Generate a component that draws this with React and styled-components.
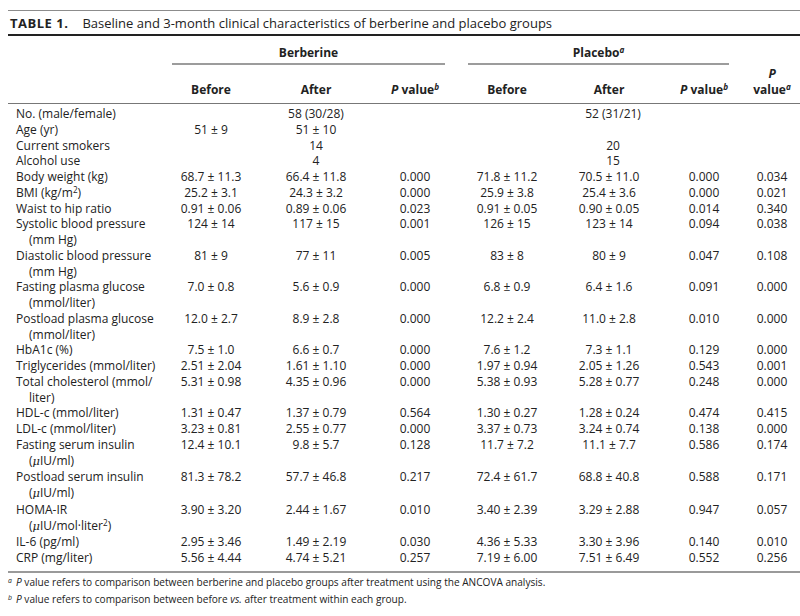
import React from 'react'
import styled, { createGlobalStyle } from 'styled-components'

const GlobalStyle = createGlobalStyle`
  body {
    margin: 0;
    background: #fff;
    font-family: "Open Sans", "Liberation Sans", sans-serif;
    color: #222;
  }
`

const Page = styled.div`
  padding: 10px 0 0 8px;
  width: 792px;
`

const TitleBar = styled.div`
  display: flex;
  align-items: center;
  height: 23px;
  border-top: 1px solid #8c8c8c;
  border-bottom: 2px solid #222;
  font-size: 13px;
  white-space: nowrap;
`

const TableNo = styled.span`
  font-weight: 700;
  letter-spacing: 0.5px;
  padding-left: 2px;
  margin-right: 14px;
`

const Table = styled.table`
  width: 792px;
  border-collapse: collapse;
  table-layout: fixed;
  font-size: 12px;
`

const GroupCell = styled.th`
  padding: 9px 0 0;
  font-weight: 700;
  vertical-align: top;
`

const GroupLine = styled.div`
  margin: 0 ${p => p.$right}px 0 ${p => p.$left}px;
  padding-bottom: 2px;
  line-height: 16px;
  border-bottom: 2px solid #9c9c9c;
  text-align: center;
`

const HeadCell = styled.th`
  padding: 1px 0 5px;
  line-height: 16px;
  font-weight: 700;
  text-align: center;
  vertical-align: bottom;
  border-bottom: 1px solid #777;
`

const Row = styled.tr`
  &:first-child td {
    padding-top: 2px;
  }
  &:last-child td {
    padding-bottom: 5px;
    border-bottom: 2px solid #9a9a9a;
  }
`

const LabelCell = styled.td`
  padding: 0 0 0 21px;
  text-indent: -13px;
  line-height: 15.75px;
  vertical-align: top;
  white-space: nowrap;
`

const Cell = styled.td`
  padding: 0;
  padding-left: ${p => p.$shift || 0}px;
  line-height: 15.75px;
  text-align: center;
  vertical-align: top;
  white-space: nowrap;
`

const Sup = styled.sup`
  font-size: 0.68em;
  line-height: 0;
  vertical-align: 0.45em;
  font-style: ${p => (p.$italic ? 'italic' : 'normal')};
`

const Mu = styled.span`
  font-family: "DejaVu Serif", "Liberation Serif", serif;
  font-style: italic;
  font-size: 0.95em;
`

const Notes = styled.div`
  padding-top: 1px;
  font-size: 10.1px;
  line-height: 17px;
`

const Note = styled.div`
  white-space: nowrap;
`

const NoteMark = styled(Sup)`
  display: inline-block;
  width: 8px;
`

const I = styled.i`
  font-style: italic;
`

const PVal = ({ mark }) => (
  <>
    <I>P</I> value<Sup $italic>{mark}</Sup>
  </>
)

const rows = [
  { label: ['No. (male/female)'], v: ['', '58 (30/28)', '', '', '52 (31/21)', '', ''], shift: true },
  { label: ['Age (yr)'], v: ['51 ± 9', '51 ± 10', '', '', '', '', ''] },
  { label: ['Current smokers'], v: ['', '14', '', '', '20', '', ''], shift: true },
  { label: ['Alcohol use'], v: ['', '4', '', '', '15', '', ''], shift: true },
  { label: ['Body weight (kg)'], v: ['68.7 ± 11.3', '66.4 ± 11.8', '0.000', '71.8 ± 11.2', '70.5 ± 11.0', '0.000', '0.034'] },
  { label: [<>BMI (kg/m<Sup>2</Sup>)</>], v: ['25.2 ± 3.1', '24.3 ± 3.2', '0.000', '25.9 ± 3.8', '25.4 ± 3.6', '0.000', '0.021'] },
  { label: ['Waist to hip ratio'], v: ['0.91 ± 0.06', '0.89 ± 0.06', '0.023', '0.91 ± 0.05', '0.90 ± 0.05', '0.014', '0.340'] },
  { label: ['Systolic blood pressure', '(mm Hg)'], v: ['124 ± 14', '117 ± 15', '0.001', '126 ± 15', '123 ± 14', '0.094', '0.038'] },
  { label: ['Diastolic blood pressure', '(mm Hg)'], v: ['81 ± 9', '77 ± 11', '0.005', '83 ± 8', '80 ± 9', '0.047', '0.108'] },
  { label: ['Fasting plasma glucose', '(mmol/liter)'], v: ['7.0 ± 0.8', '5.6 ± 0.9', '0.000', '6.8 ± 0.9', '6.4 ± 1.6', '0.091', '0.000'] },
  { label: ['Postload plasma glucose', '(mmol/liter)'], v: ['12.0 ± 2.7', '8.9 ± 2.8', '0.000', '12.2 ± 2.4', '11.0 ± 2.8', '0.010', '0.000'] },
  { label: ['HbA1c (%)'], v: ['7.5 ± 1.0', '6.6 ± 0.7', '0.000', '7.6 ± 1.2', '7.3 ± 1.1', '0.129', '0.000'] },
  { label: ['Triglycerides (mmol/liter)'], v: ['2.51 ± 2.04', '1.61 ± 1.10', '0.000', '1.97 ± 0.94', '2.05 ± 1.26', '0.543', '0.001'] },
  { label: ['Total cholesterol (mmol/', 'liter)'], v: ['5.31 ± 0.98', '4.35 ± 0.96', '0.000', '5.38 ± 0.93', '5.28 ± 0.77', '0.248', '0.000'] },
  { label: ['HDL-c (mmol/liter)'], v: ['1.31 ± 0.47', '1.37 ± 0.79', '0.564', '1.30 ± 0.27', '1.28 ± 0.24', '0.474', '0.415'] },
  { label: ['LDL-c (mmol/liter)'], v: ['3.23 ± 0.81', '2.55 ± 0.77', '0.000', '3.37 ± 0.73', '3.24 ± 0.74', '0.138', '0.000'] },
  { label: ['Fasting serum insulin', <>(<Mu>μ</Mu>IU/ml)</>], v: ['12.4 ± 10.1', '9.8 ± 5.7', '0.128', '11.7 ± 7.2', '11.1 ± 7.7', '0.586', '0.174'] },
  { label: ['Postload serum insulin', <>(<Mu>μ</Mu>IU/ml)</>], v: ['81.3 ± 78.2', '57.7 ± 46.8', '0.217', '72.4 ± 61.7', '68.8 ± 40.8', '0.588', '0.171'] },
  { label: ['HOMA-IR', <>(<Mu>μ</Mu>IU/mol·liter<Sup>2</Sup>)</>], v: ['3.90 ± 3.20', '2.44 ± 1.67', '0.010', '3.40 ± 2.39', '3.29 ± 2.88', '0.947', '0.057'] },
  { label: ['IL-6 (pg/ml)'], v: ['2.95 ± 3.46', '1.49 ± 2.19', '0.030', '4.36 ± 5.33', '3.30 ± 3.96', '0.140', '0.010'] },
  { label: ['CRP (mg/liter)'], v: ['5.56 ± 4.44', '4.74 ± 5.21', '0.257', '7.19 ± 6.00', '7.51 ± 6.49', '0.552', '0.256'] },
]

const widths = [152, 102, 108, 90, 94, 110, 80, 56]

const App = () => (
  <>
    <GlobalStyle />
    <Page>
      <TitleBar>
        <TableNo>TABLE 1.</TableNo>
        Baseline and 3-month clinical characteristics of berberine and placebo groups
      </TitleBar>
      <Table>
        <colgroup>
          {widths.map((w, i) => <col key={i} style={{ width: w }} />)}
        </colgroup>
        <thead>
          <tr>
            <GroupCell />
            <GroupCell colSpan={3}>
              <GroupLine $left={12} $right={15}>Berberine</GroupLine>
            </GroupCell>
            <GroupCell colSpan={3}>
              <GroupLine $left={8} $right={15}>Placebo<Sup $italic>a</Sup></GroupLine>
            </GroupCell>
            <GroupCell />
          </tr>
          <tr>
            <HeadCell />
            <HeadCell>Before</HeadCell>
            <HeadCell>After</HeadCell>
            <HeadCell><PVal mark="b" /></HeadCell>
            <HeadCell>Before</HeadCell>
            <HeadCell>After</HeadCell>
            <HeadCell><PVal mark="b" /></HeadCell>
            <HeadCell><I>P</I><br />value<Sup $italic>a</Sup></HeadCell>
          </tr>
        </thead>
        <tbody>
          {rows.map((r, i) => (
            <Row key={i}>
              <LabelCell>
                {r.label.map((l, j) => (
                  <React.Fragment key={j}>
                    {j > 0 && <br />}
                    {l}
                  </React.Fragment>
                ))}
              </LabelCell>
              {r.v.map((v, j) => (
                <Cell key={j} $shift={r.shift && j === 4 ? 8 : 0}>{v}</Cell>
              ))}
            </Row>
          ))}
        </tbody>
      </Table>
      <Notes>
        <Note>
          <NoteMark $italic>a</NoteMark>
          <I>P</I> value refers to comparison between berberine and placebo groups after treatment using the ANCOVA analysis.
        </Note>
        <Note>
          <NoteMark $italic>b</NoteMark>
          <I>P</I> value refers to comparison between before <I>vs.</I> after treatment within each group.
        </Note>
      </Notes>
    </Page>
  </>
)

export default App
